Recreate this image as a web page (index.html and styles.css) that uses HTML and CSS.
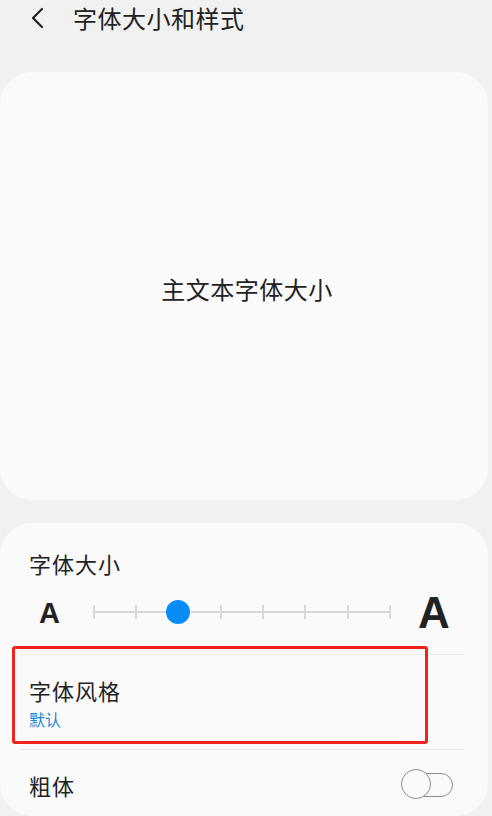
FILE: index.html
```html
<!DOCTYPE html>
<html lang="zh-CN">
<head>
    <meta charset="UTF-8">
    <meta name="viewport" content="width=device-width, initial-scale=1.0">
    <title>字体大小和样式</title>
    <link rel="stylesheet" href="styles.css">
</head>
<body>
    <div class="header">
        <svg class="back" width="16" height="24" viewBox="0 0 16 24">
            <path d="M12 3 L3 12 L12 21" fill="none" stroke="#222" stroke-width="2.2" stroke-linecap="round" stroke-linejoin="round"/>
        </svg>
        <h1>字体大小和样式</h1>
    </div>

    <div class="card preview">
        <p>主文本字体大小</p>
    </div>

    <div class="card settings">
        <div class="size-block">
            <div class="label">字体大小</div>
            <div class="slider-row">
                <span class="a-small">A</span>
                <div class="slider">
                    <div class="track"></div>
                    <div class="ticks">
                        <span></span><span></span><span></span><span></span>
                        <span></span><span></span><span></span><span></span>
                    </div>
                    <div class="thumb"></div>
                </div>
                <span class="a-big">A</span>
            </div>
        </div>

        <div class="divider"></div>

        <div class="style-item">
            <div class="label">字体风格</div>
            <div class="sub">默认</div>
        </div>

        <div class="divider"></div>

        <div class="bold-item">
            <div class="label">粗体</div>
            <div class="toggle"><span class="knob"></span></div>
        </div>

        <!-- red annotation box -->
        <div class="highlight"></div>
    </div>
</body>
</html>
```

FILE: styles.css
```css
body {
    margin: 0;
    background: #f1f1f1;
    font-family: "Noto Sans CJK SC", "Noto Sans", sans-serif;
    color: #222;
    width: 492px;
    height: 816px;
    overflow: hidden;
}

.header {
    display: flex;
    align-items: center;
    height: 36px;
    padding-left: 30px;
}

.header .back {
    margin-right: 27px;
}

.header h1 {
    margin: 0;
    font-size: 24px;
    line-height: 30px;
    font-weight: 400;
    letter-spacing: 0.5px;
}

.card {
    background: #fafafa;
    border-radius: 32px;
    margin-right: 4px;
}

.preview {
    margin-top: 36px;
    height: 428px;
    display: flex;
    align-items: center;
    justify-content: center;
}

.preview p {
    margin: 6px 0 0 6px;
    font-size: 24px;
    line-height: 30px;
    letter-spacing: 0.5px;
}

.settings {
    margin-top: 23px;
    height: 293px;
    position: relative;
}

.label {
    font-size: 22px;
    line-height: 30px;
    letter-spacing: 1px;
}

.size-block {
    padding: 25px 0 0 29px;
}

.slider-row {
    display: flex;
    align-items: center;
    height: 46px;
    margin-top: 11px;
}

.a-small {
    font-family: "Liberation Sans", sans-serif;
    font-weight: 700;
    font-size: 29px;
    line-height: 30px;
    margin: 2px 0 0 10px;
    width: 54px;
}

.a-big {
    font-family: "Liberation Sans", sans-serif;
    font-weight: 700;
    font-size: 44px;
    line-height: 46px;
    margin-left: 27px;
    margin-top: 2px;
}

.slider {
    position: relative;
    width: 298px;
    height: 24px;
}

.track {
    position: absolute;
    left: 0;
    right: 0;
    top: 11px;
    height: 2px;
    background: #d8d8d8;
}

.ticks {
    display: flex;
    justify-content: space-between;
    height: 100%;
    align-items: center;
}

.ticks span {
    width: 2px;
    height: 14px;
    background: #d8d8d8;
}

.thumb {
    position: absolute;
    left: 73px;
    top: 0;
    width: 24px;
    height: 24px;
    border-radius: 50%;
    background: #0a8cf7;
}

.divider {
    height: 1px;
    background: #ebebeb;
    margin: 19px 24px 0 20px;
}

.style-item {
    padding: 20px 0 0 29px;
}

.sub {
    font-size: 16px;
    line-height: 22px;
    color: #1a86d8;
    margin-top: 3px;
}

.bold-item {
    display: flex;
    align-items: center;
    justify-content: space-between;
    padding: 20px 35px 0 29px;
}

.toggle {
    position: relative;
    width: 46px;
    height: 22px;
    border: 1.5px solid #8c8c8c;
    border-radius: 12px;
}

.knob {
    position: absolute;
    left: -5px;
    top: -5px;
    width: 28px;
    height: 28px;
    border-radius: 50%;
    border: 1.5px solid #8c8c8c;
    background: #fafafa;
}

.highlight {
    position: absolute;
    left: 12px;
    top: 123px;
    width: 416px;
    height: 98px;
    box-sizing: border-box;
    border: 3px solid #f0231c;
    border-radius: 3px;
}
```
